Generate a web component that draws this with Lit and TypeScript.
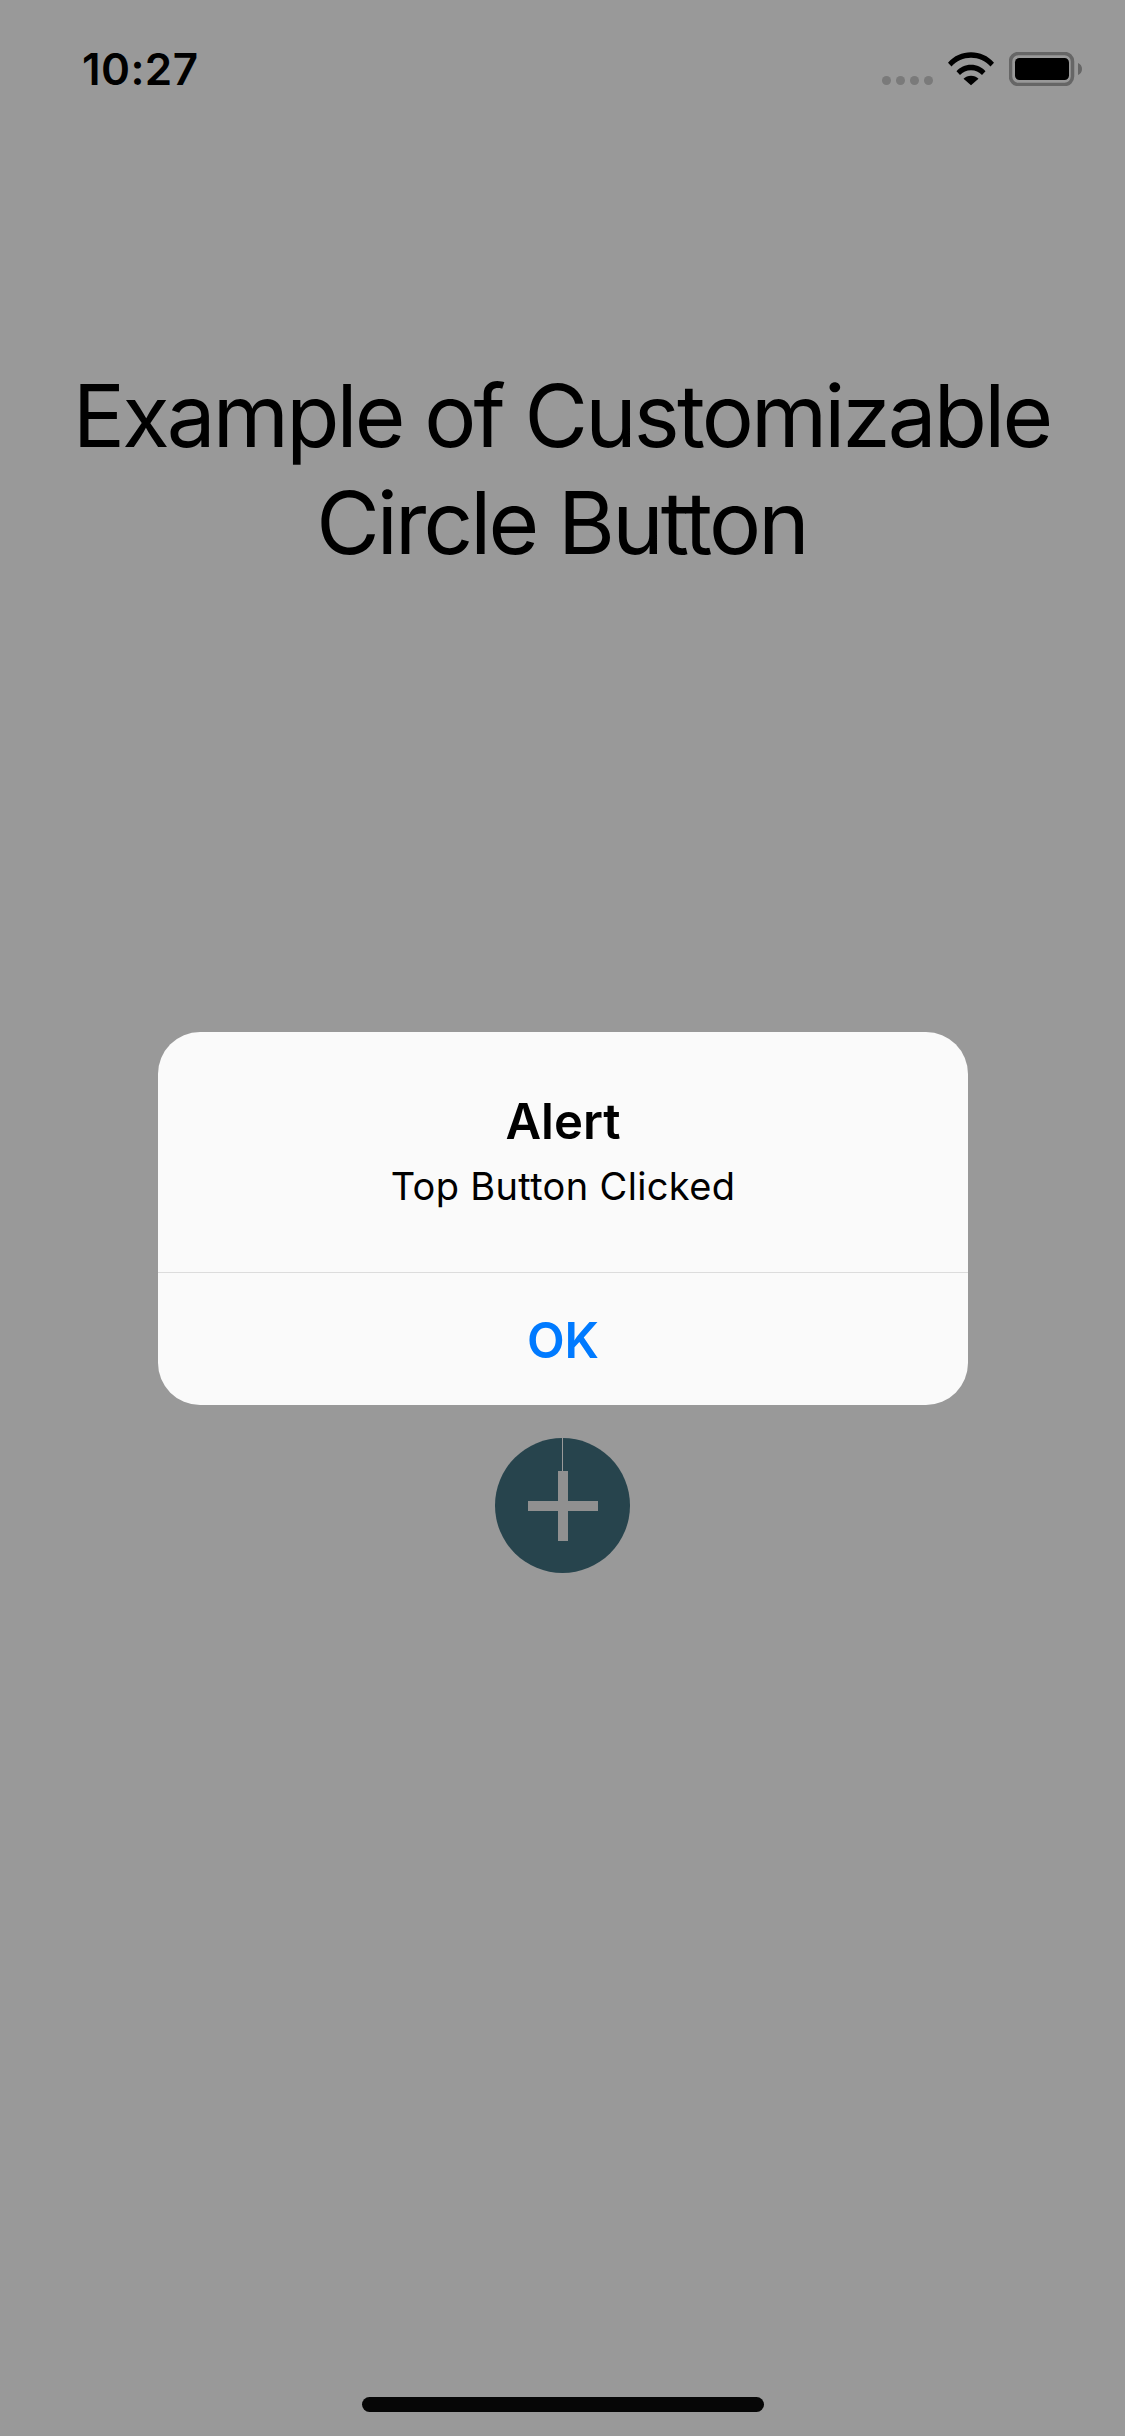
import { LitElement, html, css } from "lit";
import { customElement } from "lit/decorators.js";

@customElement("app-root")
export class AppRoot extends LitElement {
  static styles = css`
    :host {
      display: block;
      width: 1125px;
      height: 2436px;
      overflow: hidden;
      font-family: Inter, "Liberation Sans", sans-serif;
    }
    .page {
      position: relative;
      height: 2436px;
      box-sizing: border-box;
      background: #999999;
      display: flex;
      flex-direction: column;
      align-items: center;
    }
    .status {
      align-self: stretch;
      height: 132px;
      box-sizing: border-box;
      padding: 52px 43px 0 82px;
      display: flex;
      justify-content: space-between;
      align-items: flex-start;
    }
    .time {
      font-size: 44px;
      font-weight: 600;
      line-height: 34px;
      color: #000;
      letter-spacing: 0.4px;
    }
    .icons {
      display: flex;
      align-items: flex-start;
    }
    .dots {
      display: flex;
      gap: 5px;
      margin: 24px 15px 0 0;
    }
    .dot {
      width: 9px;
      height: 9px;
      border-radius: 50%;
      background: #7a7a7a;
    }
    .wifi {
      display: block;
      width: 46px;
      height: 34px;
      margin-right: 15px;
    }
    .battery {
      display: block;
      width: 73px;
      height: 34px;
    }
    h1 {
      margin: 230px 0 0;
      width: 1125px;
      box-sizing: border-box;
      padding-right: 2px;
      text-align: center;
      font-size: 87px;
      font-weight: 400;
      line-height: 107px;
      letter-spacing: -2.85px;
      color: #000;
    }
    .fab {
      margin-top: 862px;
      width: 135px;
      height: 135px;
      border-radius: 50%;
      background: #27444d;
      display: flex;
      align-items: center;
      justify-content: center;
    }
    .fab svg {
      display: block;
      width: 135px;
      height: 135px;
    }
    .home {
      position: absolute;
      bottom: 24px;
      left: 362px;
      width: 402px;
      height: 15px;
      border-radius: 8px;
      background: #060606;
    }
    .overlay {
      position: absolute;
      inset: 0;
      display: flex;
      align-items: center;
      justify-content: center;
    }
    .alert {
      width: 810px;
      height: 373px;
      margin-left: 1px;
      background: #fafafa;
      border-radius: 42px;
      display: flex;
      flex-direction: column;
      text-align: center;
    }
    .body {
      flex: 1;
      box-sizing: border-box;
      padding-top: 60px;
    }
    .title {
      font-size: 49px;
      font-weight: 600;
      line-height: 60px;
      color: #000;
    }
    .msg {
      font-size: 38px;
      font-weight: 400;
      line-height: 46px;
      margin-top: 11px;
      letter-spacing: 0.35px;
      color: #000;
    }
    .ok {
      height: 133px;
      box-sizing: border-box;
      border-top: 1px solid #dcdcdc;
      padding-top: 3px;
      display: flex;
      align-items: center;
      justify-content: center;
      font-size: 49px;
      font-weight: 600;
      color: #007aff;
    }
  `;

  render() {
    return html`
      <div class="page">
        <div class="status">
          <div class="time">10:27</div>
          <div class="icons">
            <div class="dots">
              <span class="dot"></span><span class="dot"></span><span class="dot"></span><span class="dot"></span>
            </div>
            <svg class="wifi" viewBox="0 0.800 46 34">
              <path fill="#000" d="M0 11.500C6 4.500 14 1 23 1s17 3.500 23 10.500l-3.500 3.800C37.500 9.500 30.500 6.500 23 6.500S8.500 9.500 3.500 15.300z"/>
              <path fill="#000" d="M8.500 20C12 16 17 13.500 23 13.500S34 16 37.500 20L34 23.800C31 20.800 27.500 19 23 19s-8 1.800-11 4.800z"/>
              <path fill="#000" d="M15.500 27.500C17.500 25.500 20 24.500 23 24.500s5.500 1 7.500 3L23 34z"/>
            </svg>
            <svg class="battery" viewBox="0 0 73 34">
              <rect x="1.500" y="1.500" width="62" height="31" rx="8" fill="none" stroke="#666" stroke-width="3.500"/>
              <rect x="6" y="6" width="54" height="22" rx="4.500" fill="#000"/>
              <path fill="#666" d="M69 11c2.500 1 4 3.300 4 6s-1.500 5-4 6z"/>
            </svg>
          </div>
        </div>
        <h1>Example of Customizable<br />Circle Button</h1>
        <div class="fab">
          <svg viewBox="0 0 135 135">
            <rect x="67" y="0" width="1" height="33" fill="#9a9a9a"/>
            <rect x="33" y="63" width="70" height="10" fill="#909090"/>
            <rect x="63" y="33" width="10" height="70" fill="#909090"/>
          </svg>
        </div>
        <div class="overlay">
          <div class="alert">
            <div class="body">
              <div class="title">Alert</div>
              <div class="msg">Top Button Clicked</div>
            </div>
            <div class="ok">OK</div>
          </div>
        </div>
        <div class="home"></div>
      </div>
    `;
  }
}
